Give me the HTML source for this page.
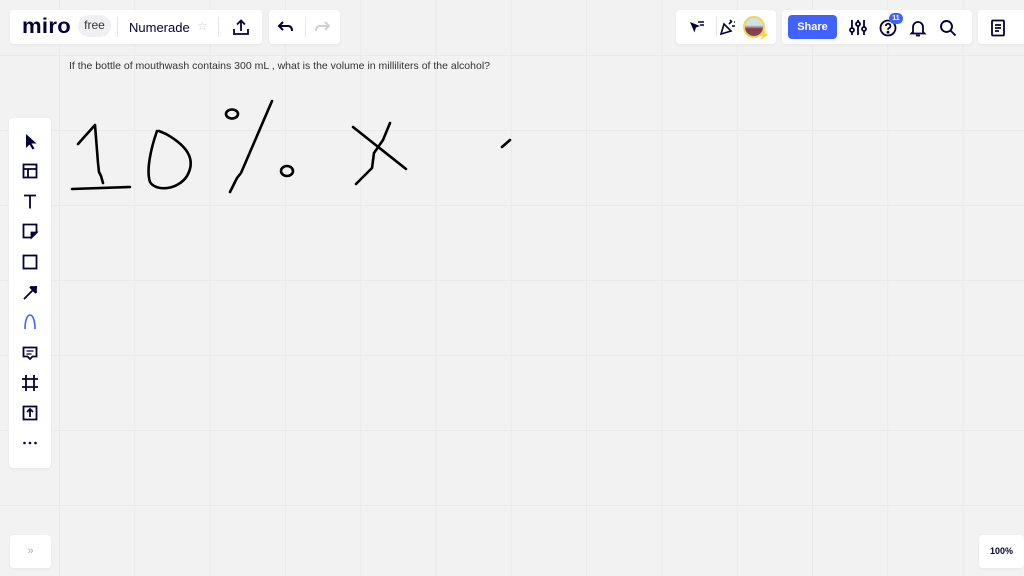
<!DOCTYPE html>
<html><head><meta charset="utf-8"><style>
*{margin:0;padding:0;box-sizing:border-box}
body{width:1024px;height:576px;overflow:hidden;background:#f2f2f2;font-family:"Liberation Sans",sans-serif;position:relative;
background-image:linear-gradient(to right,#eaeaea 1px,transparent 1px),linear-gradient(to bottom,#eaeaea 1px,transparent 1px);
background-size:75.3px 75px;background-position:59px 55px}
.p{position:absolute;background:#fff;border-radius:4px;box-shadow:0 1px 3px rgba(0,0,0,.05)}
.sep{position:absolute;width:1px;background:#e6e6e6}
svg{position:absolute}
</style></head><body>
<div class="p" style="left:10px;top:10px;width:252px;height:34px">
  <div style="position:absolute;left:12px;top:5px;font-size:21px;font-weight:bold;color:#050038;letter-spacing:0.3px;transform:scaleX(1.05);transform-origin:left">miro</div>
  <div style="position:absolute;left:68px;top:5px;width:33px;height:22px;border-radius:11px;background:#f0f0f3;font-size:12px;color:#333;text-align:center;line-height:21px">free</div>
  <div class="sep" style="left:107px;top:7px;height:20px"></div>
  <div style="position:absolute;left:119px;top:10px;font-size:13px;color:#050038">Numerade</div>
  <div style="position:absolute;left:187px;top:9px;font-size:12px;color:#c8c8c8">☆</div>
  <div class="sep" style="left:208px;top:7px;height:20px"></div>
  <svg style="left:222px;top:8px" width="18" height="18" viewBox="0 0 18 18" fill="none" stroke="#050038" stroke-width="1.8"><path d="M9 13V3M5 6.5L9 2.5L13 6.5M2 11v5h14v-5"/></svg>
</div>
<div class="p" style="left:269px;top:10px;width:71px;height:34px">
  <svg style="left:8px;top:10px" width="18" height="14" viewBox="0 0 18 14" fill="none" stroke="#050038" stroke-width="2"><path d="M3 6h8c3 0 4 2 4 5M6 2L2 6l4 4"/></svg>
  <div class="sep" style="left:36px;top:7px;height:20px"></div>
  <svg style="left:44px;top:10px" width="18" height="14" viewBox="0 0 18 14" fill="none" stroke="#d0d0d0" stroke-width="2"><path d="M15 6H7c-3 0-4 2-4 5M12 2l4 4-4 4"/></svg>
</div>
<div style="position:absolute;left:69px;top:60px;font-size:10.5px;color:#333">If the bottle of mouthwash contains 300 mL , what is the volume in milliliters of the alcohol?</div>

<div class="p" style="left:676px;top:10px;width:100px;height:34px">
  <svg style="left:12px;top:9px" width="18" height="16" viewBox="0 0 18 16"><path d="M2 3l10 4-4 1.5-1.5 5z" fill="#050038"/><path d="M10 3h6M12 6h4" stroke="#050038" stroke-width="1.5"/></svg>
  <div class="sep" style="left:40px;top:7px;height:20px"></div>
  <svg style="left:42px;top:7px" width="20" height="20" viewBox="0 0 20 20" fill="none" stroke="#050038" stroke-width="1.6"><path d="M3 17l3-10 7 7z"/><path d="M11 7l3-3M14 9h3M12 3l1 1M16 5l1 0"/></svg>
  <div style="position:absolute;left:67px;top:6px;width:22px;height:22px;border-radius:50%;background:linear-gradient(#cfe3e6 40%,#8a3b4a 60%,#7a4a5a);border:2px solid #f2d25a"></div>
  <div style="position:absolute;left:82px;top:20px;font-size:9px;color:#f2c230">⚡</div>
</div>
<div class="p" style="left:782px;top:10px;width:190px;height:34px">
  <div style="position:absolute;left:6px;top:5px;width:49px;height:24px;background:#4262ff;border-radius:4px;color:#fff;font-size:11px;font-weight:bold;text-align:center;line-height:24px">Share</div>
  <svg style="left:67px;top:9px" width="18" height="17" viewBox="0 0 18 17" fill="none" stroke="#050038" stroke-width="1.8"><path d="M3 1v15M9 1v15M15 1v15"/><circle cx="3" cy="11" r="2" fill="#fff"/><circle cx="9" cy="5" r="2" fill="#fff"/><circle cx="15" cy="10" r="2" fill="#fff"/></svg>
  <svg style="left:97px;top:9px" width="18" height="18" viewBox="0 0 18 18" fill="none" stroke="#050038" stroke-width="1.8"><circle cx="9" cy="9" r="7.5"/><path d="M6.8 7a2.3 2.3 0 1 1 3 2.2c-.6.3-.8.8-.8 1.5"/><circle cx="9" cy="13.3" r=".6" fill="#050038"/></svg>
  <div style="position:absolute;left:107px;top:3px;width:14px;height:11px;border-radius:6px;background:#4262ff;color:#fff;font-size:7px;font-weight:bold;text-align:center;line-height:11px">11</div>
  <svg style="left:127px;top:9px" width="18" height="18" viewBox="0 0 18 18" fill="none" stroke="#050038" stroke-width="1.8"><path d="M4 13V8a5 5 0 0 1 10 0v5l1.5 1.5h-13z M7 16.5h4"/></svg>
  <svg style="left:157px;top:9px" width="18" height="18" viewBox="0 0 18 18" fill="none" stroke="#050038" stroke-width="1.9"><circle cx="7.5" cy="7.5" r="5.5"/><path d="M11.5 11.5l5 5"/></svg>
</div>
<div class="p" style="left:978px;top:10px;width:46px;height:34px;border-radius:4px 0 0 4px">
  <svg style="left:12px;top:9px" width="16" height="18" viewBox="0 0 16 18" fill="none" stroke="#050038" stroke-width="1.8"><rect x="2" y="1.5" width="12" height="15" rx="1"/><path d="M5 6h6M5 9h6M5 12h4"/></svg>
</div>

<div class="p" style="left:9px;top:118px;width:42px;height:350px">
  <svg style="left:0;top:0" width="42" height="350" viewBox="0 0 42 350" fill="none" stroke="#050038" stroke-width="1.8">
    <path d="M17 16l0 14 3.5-3.5 3 5 2-1-3-5h5z" fill="#050038" stroke="none"/>
    <rect x="14.5" y="46.5" width="13" height="13"/><path d="M14.5 51h13M19 51v9"/>
    <path d="M15 77.5h12M21 77.5v13"/>
    <path d="M14.5 106.5h13v8l-5 5h-8z"/><path d="M22.5 119.5v-5h5z" fill="#050038"/>
    <rect x="14.5" y="137.5" width="13" height="13"/>
    <path d="M15 181l11-11M21 169h6v6" /><path d="M27 169l-5 1 4 4z" fill="#050038"/>
    <path d="M16 211c0-8 2-14 5-14s5 6 5 14" stroke="#4262ff" stroke-width="1.6"/>
    <path d="M14.5 229.5h13v9h-4l-2.5 2.5-2.5-2.5h-4z"/><path d="M17.5 233h7M17.5 236h5" stroke-width="1.3"/>
    <path d="M17 257v16M25 257v16M13 261h16M13 269h16"/>
    <path d="M14.5 288.5h13v13h-13z M21 299v-8M18 294l3-3 3 3"/>
    <circle cx="15.5" cy="325" r="1.3" fill="#050038" stroke="none"/><circle cx="21" cy="325" r="1.3" fill="#050038" stroke="none"/><circle cx="26.5" cy="325" r="1.3" fill="#050038" stroke="none"/>
  </svg>
</div>

<svg style="left:0;top:0" width="1024" height="576" viewBox="0 0 1024 576" fill="none" stroke="#000" stroke-width="2.6" stroke-linecap="round" stroke-linejoin="round">
  <path d="M78 144L95 125L98 163L99 172L101 176L103 183"/>
  <path d="M72 189L130 187"/>
  <path d="M157 131C151 148 146 170 150 182C156 192 178 190 187 176C195 162 191 148 166 134L159 131"/>
  <path d="M230 192L237 178L241 173L272 101"/>
  <ellipse cx="232" cy="114" rx="6" ry="4.5"/>
  <ellipse cx="287" cy="171" rx="6" ry="5"/>
  <path d="M353 127L406 169"/>
  <path d="M390 123L383 140L374 153L372 168L356 184"/>
  <path d="M502 147L510 140"/>
</svg>

<div class="p" style="left:10px;top:535px;width:41px;height:33px;font-size:11px;color:#aaa;text-align:center;line-height:33px">»</div>
<div class="p" style="left:979px;top:535px;width:45px;height:33px;font-size:9px;font-weight:bold;color:#050038;text-align:center;line-height:33px">100%</div>
</body></html>
